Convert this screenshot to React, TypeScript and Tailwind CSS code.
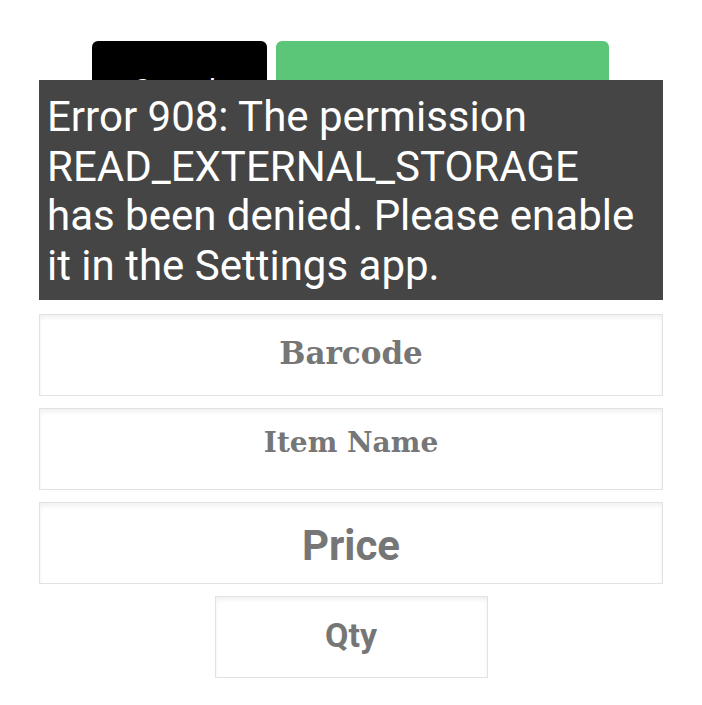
import React from 'react'

const fields = [
  { label: 'Barcode', cls: "font-['DejaVu_Serif',serif] font-bold text-[31px] pb-1", wide: true },
  { label: 'Item Name', cls: "font-['DejaVu_Serif',serif] font-bold text-[28px] pb-3", wide: true },
  { label: 'Price', cls: "font-['Roboto',sans-serif] font-bold text-[42px] pt-1", wide: true },
  { label: 'Qty', cls: "font-['Roboto',sans-serif] font-bold text-[34px] pb-1", wide: false },
]

export default function App() {
  return (
    <div className="relative w-[702px] h-[705px] bg-white overflow-hidden">
      <div className="pt-[41px] flex pl-[92px] gap-[9px]">
        <button className="w-[175px] h-[80px] rounded-md bg-black text-white font-['Roboto',sans-serif] text-[30px] pt-[26px] flex justify-center items-start">
          Search
        </button>
        <button className="w-[333px] h-[80px] rounded-md bg-[#5bc677]" />
      </div>

      <div className="flex flex-col items-center gap-[12px] mt-[193px]">
        {fields.map(f => (
          <div key={f.label}
            className={`${f.wide ? 'w-[624px]' : 'w-[273px]'} h-[82px] border border-[#e2e2e2] shadow-[inset_0_3px_4px_rgba(0,0,0,0.06)] bg-white flex items-center justify-center text-[#767676] ${f.cls}`}>
            {f.label}
          </div>
        ))}
      </div>

      <div className="absolute left-[39px] top-[80px] w-[624px] h-[220px] bg-[#454545] px-[8px] pt-[12px] text-white font-['Roboto',sans-serif] text-[42px] leading-[49.5px] whitespace-nowrap">
        Error 908: The permission<br />
        READ_EXTERNAL_STORAGE<br />
        has been denied. Please enable<br />
        it in the Settings app.
      </div>
    </div>
  )
}
